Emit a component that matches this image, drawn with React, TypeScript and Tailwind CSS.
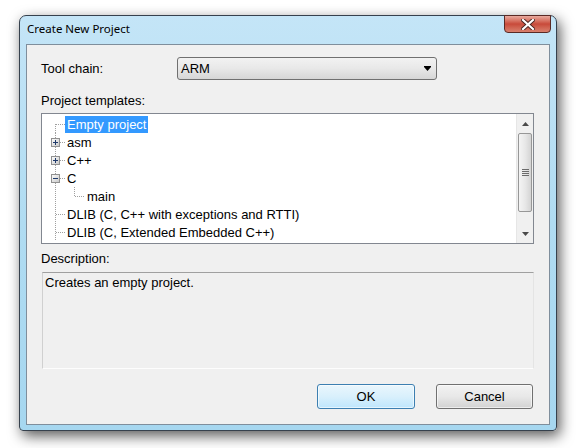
import React from 'react'

type Row = {
  label: string
  level: 0 | 1
  expander?: 'plus' | 'minus'
  first?: boolean
  selected?: boolean
}

const rows: Row[] = [
  { label: 'Empty project', level: 0, first: true, selected: true },
  { label: 'asm', level: 0, expander: 'plus' },
  { label: 'C++', level: 0, expander: 'plus' },
  { label: 'C', level: 0, expander: 'minus' },
  { label: 'main', level: 1 },
  { label: 'DLIB (C, C++ with exceptions and RTTI)', level: 0 },
  { label: 'DLIB (C, Extended Embedded C++)', level: 0 },
]

const dot = '#a0a0a0'

function Gutter({ row }: { row: Row }) {
  const width = row.level === 0 ? 23 : 43
  return (
    <svg width={width} height={18} className="shrink-0" shapeRendering="crispEdges">
      {/* trunk line */}
      <line x1={13.5} y1={row.first ? 9 : 0} x2={13.5} y2={18} stroke={dot} strokeDasharray="1 1" />
      {row.level === 0 ? (
        <line x1={14} y1={9.5} x2={23} y2={9.5} stroke={dot} strokeDasharray="1 1" />
      ) : (
        <>
          <line x1={32.5} y1={0} x2={32.5} y2={10} stroke={dot} strokeDasharray="1 1" />
          <line x1={33} y1={9.5} x2={43} y2={9.5} stroke={dot} strokeDasharray="1 1" />
        </>
      )}
      {row.expander && (
        <g>
          <defs>
            <linearGradient id="exp" x1="0" y1="0" x2="1" y2="1">
              <stop offset="0" stopColor="#ffffff" />
              <stop offset="1" stopColor="#c6c6c6" />
            </linearGradient>
          </defs>
          <rect x={9.5} y={5.5} width={8} height={8} fill="url(#exp)" stroke="#919191" />
          <line x1={11} y1={9.5} x2={16} y2={9.5} stroke="#1f3a6b" />
          {row.expander === 'plus' && <line x1={13.5} y1={7} x2={13.5} y2={12} stroke="#1f3a6b" />}
        </g>
      )}
    </svg>
  )
}

function Scrollbar() {
  return (
    <div className="w-[17px] h-full flex flex-col bg-[#f0f0f0] border-l border-[#e6e6e6] shrink-0">
      <div className="h-[19px] flex items-center justify-center">
        <svg width="7" height="4">
          <path d="M3.5 0 L7 4 L0 4 Z" fill="#4a4a4a" />
        </svg>
      </div>
      <div className="h-[79px] mx-[1px] rounded-[2px] border border-[#979797] bg-gradient-to-r from-[#f4f4f4] via-[#e8e8e8] to-[#d4d4d4] flex flex-col items-center justify-center gap-[1px]">
        <div className="w-[7px] h-[1px] bg-[#6b6b6b]" />
        <div className="w-[7px] h-[1px] bg-[#6b6b6b]" />
        <div className="w-[7px] h-[1px] bg-[#6b6b6b]" />
        <div className="w-[7px] h-[1px] bg-[#6b6b6b]" />
      </div>
      <div className="flex-1" />
      <div className="h-[19px] flex items-center justify-center">
        <svg width="7" height="4">
          <path d="M0 0 L7 0 L3.5 4 Z" fill="#4a4a4a" />
        </svg>
      </div>
    </div>
  )
}

export default function App() {
  return (
    <div className="w-[583px] h-[448px] bg-white pl-[19px] pt-[15px] font-['Liberation_Sans',Arial,sans-serif] text-[13px] text-black">
      {/* Window frame */}
      <div className="w-[538px] h-[416px] rounded-t-[7px] rounded-b-[4px] border border-[#36414d] bg-gradient-to-b from-[#c4e5f7] via-[#b0dcf2] to-[#a6d7f0] shadow-[3px_5px_14px_rgba(0,0,0,0.65)] flex flex-col">
        {/* Title bar */}
        <div className="h-[28px] flex items-start justify-between pl-[7px] pr-[5px]">
          <span className="mt-[5px] font-['Noto_Sans',sans-serif] text-[11.5px] leading-[16px] text-black">
            Create New Project
          </span>
          <div className="w-[47px] h-[18px] -mt-[1px] rounded-b-[4px] border border-[#5a2a25] bg-gradient-to-b from-[#e8aa9f] via-[#c84a3a] to-[#d8806e] flex items-center justify-center">
            <svg width="14" height="11" viewBox="0 0 14 11">
              <path d="M2 1 L12 10 M12 1 L2 10" stroke="#4a2420" strokeWidth="4" strokeLinecap="square" />
              <path d="M2 1 L12 10 M12 1 L2 10" stroke="#ffffff" strokeWidth="2.2" strokeLinecap="square" />
            </svg>
          </div>
        </div>

        {/* Client area */}
        <div className="mx-[6px] mb-[5px] flex-1 border border-[#7f8e9c] bg-[#f0f0f0] pl-[14px] pr-[15px] pt-[12px] flex flex-col">
          {/* Tool chain row */}
          <div className="flex items-center h-[23px]">
            <span className="w-[136px]">Tool chain:</span>
            <div className="w-[260px] h-[23px] rounded-[3px] border border-[#707070] bg-gradient-to-b from-[#f2f2f2] via-[#e8e8e8] to-[#d6d6d6] flex items-center justify-between pl-[3px] pr-[5px]">
              <span>ARM</span>
              <svg width="7" height="5">
                <rect x="0" y="0" width="7" height="1" fill="#000" />
                <path d="M0 1 L7 1 L3.5 5 Z" fill="#000" />
              </svg>
            </div>
          </div>

          <div className="mt-[13px] h-[16px] leading-[16px]">Project templates:</div>

          {/* Template tree */}
          <div className="mt-[4px] w-[493px] h-[131px] border border-[#828790] bg-white flex">
            <div className="flex-1 pt-[1px] overflow-hidden">
              {rows.map((row, i) => (
                <div key={i} className="h-[18px] flex items-center">
                  <Gutter row={row} />
                  <span
                    className={
                      row.selected
                        ? 'h-[17px] leading-[17px] px-[2px] bg-[#3399ff] text-white whitespace-nowrap'
                        : 'h-[17px] leading-[17px] px-[2px] whitespace-nowrap'
                    }
                  >
                    {row.label}
                  </span>
                </div>
              ))}
            </div>
            <Scrollbar />
          </div>

          <div className="mt-[7px] h-[16px] leading-[16px]">Description:</div>

          {/* Description box */}
          <div className="mt-[5px] ml-[1px] w-[492px] h-[97px] border-t border-l border-t-[#a0a0a0] border-l-[#d0d0d0] border-r border-b border-r-[#e4e4e4] border-b-[#fdfdfd] px-[2px] pt-[2px] leading-[16px]">
            Creates an empty project.
          </div>

          {/* Buttons */}
          <div className="mt-[15px] flex justify-end gap-[21px] pr-[1px]">
            <button className="w-[98px] h-[25px] rounded-[3px] border border-[#3c7fb1] bg-gradient-to-b from-[#eaf6fd] via-[#d9f0fc] to-[#bee6fd] shadow-[inset_0_0_0_1px_rgba(255,255,255,0.6)]">
              OK
            </button>
            <button className="w-[97px] h-[25px] rounded-[3px] border border-[#707070] bg-gradient-to-b from-[#f2f2f2] via-[#e8e8e8] to-[#d2d2d2] shadow-[inset_0_0_0_1px_rgba(255,255,255,0.6)]">
              Cancel
            </button>
          </div>
        </div>
      </div>
    </div>
  )
}
